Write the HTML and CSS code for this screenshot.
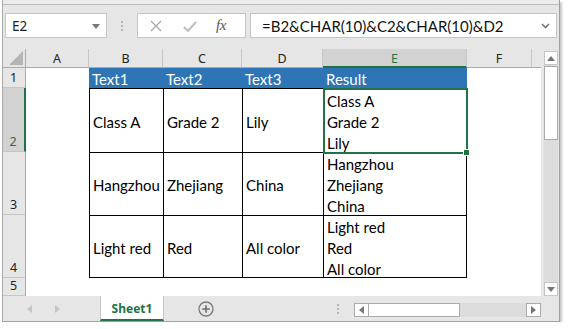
FILE: index.html
```html
<!DOCTYPE html>
<html>
<head>
<meta charset="utf-8">
<link rel="stylesheet" href="styles.css">
</head>
<body>
<div class="window">
  <div class="topstrip"></div>
  <div class="fbar">
    <div class="namebox">
      <span class="nb-text">E2</span>
      <svg class="nb-caret" width="8" height="5" viewBox="0 0 8 5"><path d="M0 0 H8 L4 5 Z" fill="#777"/></svg>
    </div>
    <div class="grip"><i></i><i></i><i></i></div>
    <div class="btns">
      <svg class="ic-x" width="12" height="12" viewBox="0 0 12 12"><path d="M1 1 L11 11 M11 1 L1 11" stroke="#a8a8a8" stroke-width="1.3" fill="none"/></svg>
      <svg class="ic-check" width="14" height="11" viewBox="0 0 14 11"><path d="M1 6 L5 10 L13 1" stroke="#bdbdbd" stroke-width="2" fill="none"/></svg>
      <span class="fx">fx</span>
    </div>
    <div class="formula">
      <span class="f-text">=B2&amp;CHAR(10)&amp;C2&amp;CHAR(10)&amp;D2</span>
      <svg class="f-chev" width="9" height="6" viewBox="0 0 9 6"><path d="M1 1 L4.5 4.5 L8 1" stroke="#777" stroke-width="1.6" fill="none"/></svg>
    </div>
  </div>
  <div class="main">
    <div class="sheet">
      <div class="corner"><svg width="14" height="14" viewBox="0 0 14 14"><path d="M14 0 V14 H0 Z" fill="#b5b5b5"/></svg></div>
      <div class="ch">A</div>
      <div class="ch">B</div>
      <div class="ch">C</div>
      <div class="ch">D</div>
      <div class="ch sel">E</div>
      <div class="ch">F</div>
      <div class="ch last"></div>

      <div class="rh">1</div>
      <div class="c"></div>
      <div class="hd">Text1</div>
      <div class="hd">Text2</div>
      <div class="hd">Text3</div>
      <div class="hd">Result</div>
      <div class="c"></div>
      <div class="c"></div>

      <div class="rh sel">2</div>
      <div class="c"></div>
      <div class="t">Class A</div>
      <div class="t">Grade 2</div>
      <div class="t">Lily</div>
      <div class="t e active"><span>Class A</span><span>Grade 2</span><span>Lily</span></div>
      <div class="c"></div>
      <div class="c"></div>

      <div class="rh">3</div>
      <div class="c"></div>
      <div class="t">Hangzhou</div>
      <div class="t">Zhejiang</div>
      <div class="t">China</div>
      <div class="t e"><span>Hangzhou</span><span>Zhejiang</span><span>China</span></div>
      <div class="c"></div>
      <div class="c"></div>

      <div class="rh">4</div>
      <div class="c"></div>
      <div class="t b">Light red</div>
      <div class="t b">Red</div>
      <div class="t b">All color</div>
      <div class="t b e"><span>Light red</span><span>Red</span><span>All color</span></div>
      <div class="c"></div>
      <div class="c"></div>

      <div class="rh">5</div>
      <div class="c"></div>
      <div class="c"></div>
      <div class="c"></div>
      <div class="c"></div>
      <div class="c"></div>
      <div class="c"></div>
      <div class="c"></div>
    </div>
    <div class="vscroll">
      <div class="sbtn"><svg width="8" height="5" viewBox="0 0 8 5"><path d="M0 5 H8 L4 0 Z" fill="#777"/></svg></div>
      <div class="vthumb"></div>
      <div class="vtrack"></div>
      <div class="sbtn"><svg width="8" height="5" viewBox="0 0 8 5"><path d="M0 0 H8 L4 5 Z" fill="#777"/></svg></div>
    </div>
  </div>
  <div class="tabbar">
    <div class="nav">
      <svg width="5" height="8" viewBox="0 0 5 8"><path d="M5 0 V8 L0 4 Z" fill="#c4c4c4"/></svg>
      <svg width="5" height="8" viewBox="0 0 5 8"><path d="M0 0 V8 L5 4 Z" fill="#c4c4c4"/></svg>
    </div>
    <div class="tab">Sheet1</div>
    <div class="addarea">
      <svg class="add" width="16" height="16" viewBox="0 0 16 16"><circle cx="8" cy="8" r="7" stroke="#7a7a7a" stroke-width="1.3" fill="none"/><path d="M8 4.2 V11.8 M4.2 8 H11.8" stroke="#6e6e6e" stroke-width="1.6"/></svg>
    </div>
    <div class="grip2"><i></i><i></i><i></i></div>
    <div class="hscroll">
      <div class="hbtn"><svg width="5" height="8" viewBox="0 0 5 8"><path d="M5 0 V8 L0 4 Z" fill="#777"/></svg></div>
      <div class="hthumb"></div>
      <div class="htrack"></div>
      <div class="hbtn"><svg width="5" height="8" viewBox="0 0 5 8"><path d="M0 0 V8 L5 4 Z" fill="#777"/></svg></div>
    </div>
  </div>
</div>
</body>
</html>
```

FILE: styles.css
```css
* { box-sizing: border-box; }
html, body { margin: 0; padding: 0; background: #fff; }
body { font-family: "Noto Sans", "Liberation Sans", sans-serif; }

.window {
  margin-left: 2px;
  width: 558px;
  height: 322px;
  background: #e6e6e6;
  border-left: 1px solid #a9a9a9;
  border-right: 1px solid #a0a0a0;
  border-bottom: 1px solid #a0a0a0;
  box-shadow: 2px 2px 2px rgba(0,0,0,0.22);
  display: flex;
  flex-direction: column;
}

.topstrip {
  height: 5px;
  border-bottom: 1px solid #bdbdbd;
  background: #ececec;
}

/* formula bar */
.fbar {
  height: 44px;
  display: flex;
  align-items: flex-start;
  padding: 8px 0 0 2px;
}
.namebox {
  width: 102px;
  height: 25px;
  background: #fff;
  border: 1px solid #c6c6c6;
  display: flex;
  align-items: center;
  justify-content: space-between;
  padding: 0 6px 0 6px;
}
.nb-text { font-size: 13.5px; color: #222; }
.nb-caret { margin-top: 1px; }
.grip {
  width: 30px;
  height: 25px;
  display: flex;
  flex-direction: column;
  align-items: center;
  justify-content: center;
  gap: 2px;
}
.grip i, .grip2 i {
  display: block;
  width: 2px;
  height: 2px;
  background: #b4b4b4;
}
.btns {
  width: 109px;
  height: 25px;
  background: #fff;
  border: 1px solid #c6c6c6;
  display: flex;
  align-items: center;
  padding-left: 12px;
}
.ic-x { margin-right: 21px; }
.ic-check { margin-right: 19px; margin-top: 1px; }
.fx {
  font-family: "Liberation Serif", serif;
  font-style: italic;
  font-size: 15px;
  color: #555;
  letter-spacing: -0.5px;
}
.formula {
  margin-left: 4px;
  width: 307px;
  height: 25px;
  background: #fff;
  border: 1px solid #c6c6c6;
  display: flex;
  align-items: center;
  justify-content: space-between;
  padding: 1px 6px 0 11px;
}
.f-text {
  font-family: Lato, "Liberation Sans", sans-serif;
  font-size: 15px;
  color: #111;
}

/* sheet */
.main {
  height: 247px;
  display: flex;
}
.sheet {
  display: grid;
  grid-template-columns: 23px 63px 74px 79px 81px 144px 65px 9px;
  grid-template-rows: 19px 20px 64px 63px 63px 18px;
  width: 538px;
  height: 247px;
  background: #fff;
  border-right: 1px solid #ababab;
  border-bottom: 1px solid #ababab;
}
.corner {
  background: #e6e6e6;
  border-right: 1px solid #ababab;
  border-bottom: 1px solid #ababab;
  display: flex;
  align-items: flex-end;
  justify-content: flex-end;
  padding: 0 2px 2px 0;
}
.ch {
  background: #e6e6e6;
  border-right: 1px solid #c6c6c6;
  border-bottom: 1px solid #ababab;
  display: flex;
  align-items: center;
  justify-content: center;
  font-size: 12.5px;
  color: #222;
  padding-top: 1px;
}
.ch.last { border-right: none; }
.ch.sel {
  background: #d2d2d2;
  border-bottom: 2px solid #217346;
  color: #217346;
}
.rh {
  background: #e6e6e6;
  border-right: 1px solid #ababab;
  border-bottom: 1px solid #c6c6c6;
  display: flex;
  align-items: flex-end;
  justify-content: center;
  font-size: 12.5px;
  color: #222;
  padding: 0 1px 1px 0;
  line-height: 16px;
}
.rh.sel {
  background: #d2d2d2;
  border-right: 2px solid #217346;
  color: #217346;
}
.c { background: #fff; }
.hd {
  background: #2e75b6;
  color: #fff;
  font-family: Lato, "Liberation Sans", sans-serif;
  font-size: 15px;
  display: flex;
  align-items: center;
  padding: 2px 0 0 3px;
}
.t {
  font-family: Lato, "Liberation Sans", sans-serif;
  font-size: 15px;
  color: #000;
  border-left: 1px solid #000;
  border-top: 1px solid #000;
  display: flex;
  align-items: center;
  padding: 2px 0 0 3px;
  background: #fff;
}
.t.b { border-bottom: 1px solid #000; }
.t.e {
  border-right: 1px solid #000;
  flex-direction: column;
  align-items: flex-start;
  justify-content: center;
  line-height: 21px;
  padding-top: 3px;
}
.t.active { position: relative; }
.t.active::after {
  content: "";
  position: absolute;
  left: -1px;
  top: -1px;
  right: -2px;
  bottom: -2px;
  border: 2px solid #217346;
}
.t.active::before {
  content: "";
  position: absolute;
  right: -4px;
  bottom: -4px;
  width: 5px;
  height: 5px;
  background: #217346;
  border: 1px solid #fff;
  z-index: 2;
  box-sizing: content-box;
}

/* vertical scroll */
.vscroll {
  margin-left: 3px;
  margin-top: 2px;
  width: 14px;
  height: 245px;
  display: flex;
  flex-direction: column;
  background: #dcdcdc;
}
.sbtn {
  width: 14px;
  height: 14px;
  background: #fff;
  border: 1px solid #c6c6c6;
  display: flex;
  align-items: center;
  justify-content: center;
  flex: none;
}
.vthumb {
  margin-top: 1px;
  height: 74px;
  background: #fff;
  border: 1px solid #ababab;
  flex: none;
}
.vtrack { flex: 1; }

/* tab bar */
.tabbar {
  height: 25px;
  display: flex;
  align-items: stretch;
}
.nav {
  width: 97px;
  display: flex;
  align-items: center;
  padding-left: 24px;
  gap: 23px;
}
.tab {
  width: 64px;
  background: #fff;
  border-left: 1px solid #c6c6c6;
  border-right: 1px solid #c6c6c6;
  border-bottom: 2px solid #217346;
  display: flex;
  align-items: center;
  justify-content: center;
  font-weight: 700;
  font-size: 12px;
  color: #217346;
  padding-top: 1px;
}
.addarea {
  flex: 1;
  display: flex;
  align-items: center;
  padding-left: 34px;
}
.grip2 {
  width: 3px;
  margin-right: 15px;
  display: flex;
  flex-direction: column;
  align-items: center;
  justify-content: center;
  gap: 2px;
}
.hscroll {
  width: 187px;
  margin: 7px 18px 0 0;
  height: 14px;
  display: flex;
  background: #dcdcdc;
}
.hbtn {
  width: 15px;
  height: 14px;
  background: #fff;
  border: 1px solid #ababab;
  display: flex;
  align-items: center;
  justify-content: center;
  flex: none;
}
.hthumb {
  width: 91px;
  background: #fff;
  border: 1px solid #ababab;
  border-left: none;
  flex: none;
}
.htrack { flex: 1; }
```
